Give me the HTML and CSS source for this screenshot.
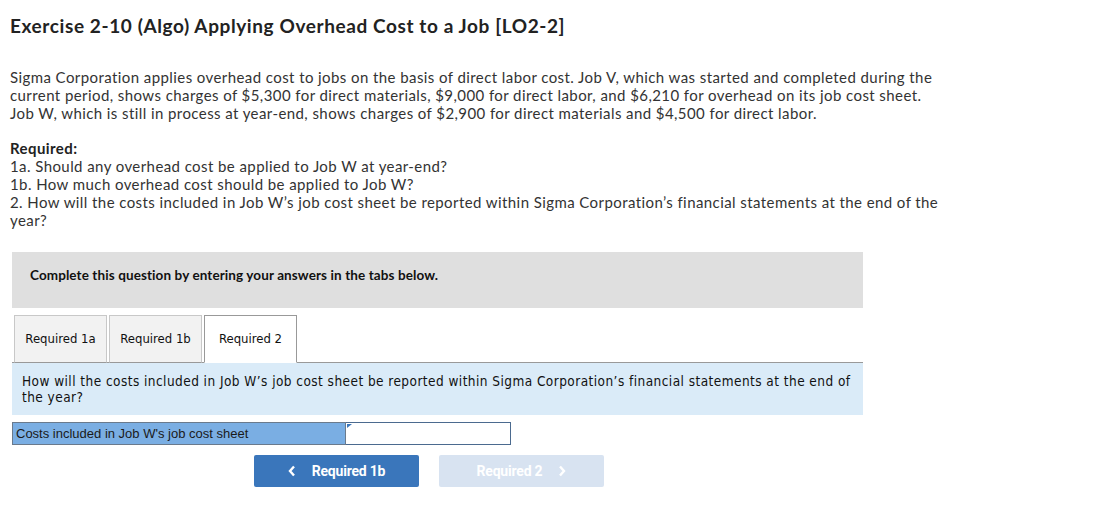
FILE: index.html
```html
<!doctype html>
<html lang="en">
<head>
<meta charset="utf-8">
<title>Exercise 2-10 (Algo) Applying Overhead Cost to a Job</title>
<link rel="stylesheet" href="styles.css">
</head>
<body>

<div class="page">
    <h1 class="title">Exercise 2-10 (Algo) Applying Overhead Cost to a Job [LO2-2]</h1>

    <p class="intro">Sigma Corporation applies overhead cost to jobs on the basis of direct labor cost. Job V, which was started and completed during the current period, shows charges of $5,300 for direct materials, $9,000 for direct labor, and $6,210 for overhead on its job cost sheet. Job W, which is still in process at year-end, shows charges of $2,900 for direct materials and $4,500 for direct labor.</p>

    <div class="required">
        <b>Required:</b><br>
        1a. Should any overhead cost be applied to Job W at year-end?<br>
        1b. How much overhead cost should be applied to Job W?<br>
        2. How will the costs included in Job W’s job cost sheet be reported within Sigma Corporation’s financial statements at the end of the year?
    </div>

    <div class="work">
        <div class="notice">Complete this question by entering your answers in the tabs below.</div>

        <div class="tabs">
            <span class="tab">Required 1a</span>
            <span class="tab">Required 1b</span>
            <span class="tab active">Required 2</span>
        </div>

        <div class="panel">How will the costs included in Job W’s job cost sheet be reported within Sigma Corporation’s financial statements at the end of the year?</div>

        <div class="answer">
            <span class="answer-label">Costs included in Job W's job cost sheet</span>
            <span class="answer-input"></span>
        </div>

        <div class="nav">
            <button class="nav-btn prev">
                <svg width="8" height="12" viewBox="0 0 8 12"><polyline points="6,1.5 2,6 6,10.5" fill="none" stroke="#fff" stroke-width="2.4"/></svg>
                Required 1b
            </button>
            <button class="nav-btn next" disabled>
                Required 2
                <svg width="8" height="12" viewBox="0 0 8 12"><polyline points="2,1.5 6,6 2,10.5" fill="none" stroke="#fff" stroke-width="2.4"/></svg>
            </button>
        </div>
    </div>
</div>

</body>
</html>
```

FILE: styles.css
```css
body{
    margin: 0;
    background: #fff;
    color: #333;
    font-family: "Lato", "Liberation Sans", sans-serif;
}
.page{
    width: 937px;
    padding: 0 10px;
}
.title{
    margin: 15px 0 0;
    font-size: 19px;
    line-height: 22px;
    font-weight: bold;
    letter-spacing: 0.6px;
    color: #222;
}
.intro{
    margin: 31px 0 0;
    font-size: 15px;
    line-height: 18px;
    letter-spacing: 0.42px;
}
.required{
    margin-top: 17px;
    font-size: 15px;
    line-height: 18px;
    letter-spacing: 0.42px;
}
.required b{
    color: #222;
}
.work{
    width: 851px;
    margin: 23px 0 0 2px;
}
.notice{
    height: 56px;
    padding-left: 18px;
    background: #dfdfdf;
    font-family: "Lato", "Liberation Sans", sans-serif;
    font-weight: bold;
    font-size: 13.5px;
    letter-spacing: 0.1px;
    line-height: 46px;
    color: #111;
}
.tabs{
    display: flex;
    gap: 2px;
    margin-top: 7px;
    padding-left: 2px;
    border-bottom: 1px solid #999;
}
.tab{
    width: 91px;
    height: 46px;
    margin-bottom: -1px;
    border: 1px solid #c8c8c8;
    border-bottom-color: #999;
    background: #f2f2f2;
    font-family: "DejaVu Sans Condensed", "DejaVu Sans", sans-serif;
    font-size: 13px;
    line-height: 46px;
    text-align: center;
    color: #111;
}
.tab.active{
    border-color: #999;
    border-bottom-color: #fff;
    background: #fff;
}
.panel{
    padding: 10px 10px 10px;
    background: #daebf8;
    font-family: "DejaVu Sans Condensed", "DejaVu Sans", sans-serif;
    font-size: 13.5px;
    letter-spacing: 0.45px;
    line-height: 16px;
    color: #111;
}
.answer{
    display: flex;
    margin-top: 7px;
    height: 23px;
}
.answer-label{
    width: 329px;
    padding-left: 3px;
    background: #7aaee3;
    border: 1px solid #6a7a8c;
    font-family: "Liberation Sans", Arial, sans-serif;
    font-size: 13px;
    line-height: 21px;
    color: #1a1a1a;
}
.answer-input{
    position: relative;
    width: 164px;
    border: 1px solid #4b6a8f;
    border-left: none;
    background: #fff;
}
.answer-input::before{
    content: "";
    position: absolute;
    top: 1px;
    left: 1px;
    border-top: 4px solid #3a76bb;
    border-right: 5px solid transparent;
    border-bottom: 4px solid transparent;
}
.nav{
    display: flex;
    gap: 20px;
    margin-top: 10px;
    padding-left: 242px;
}
.nav-btn{
    display: flex;
    align-items: center;
    justify-content: center;
    gap: 16px;
    width: 165px;
    height: 32px;
    border: none;
    border-radius: 2px;
    background: #3a76bb;
    color: #fff;
    font-family: "Roboto", "Liberation Sans", sans-serif;
    font-size: 14px;
    font-weight: bold;
    letter-spacing: -0.2px;
}
.nav-btn.next{
    background: #d8e3f1;
}
```
